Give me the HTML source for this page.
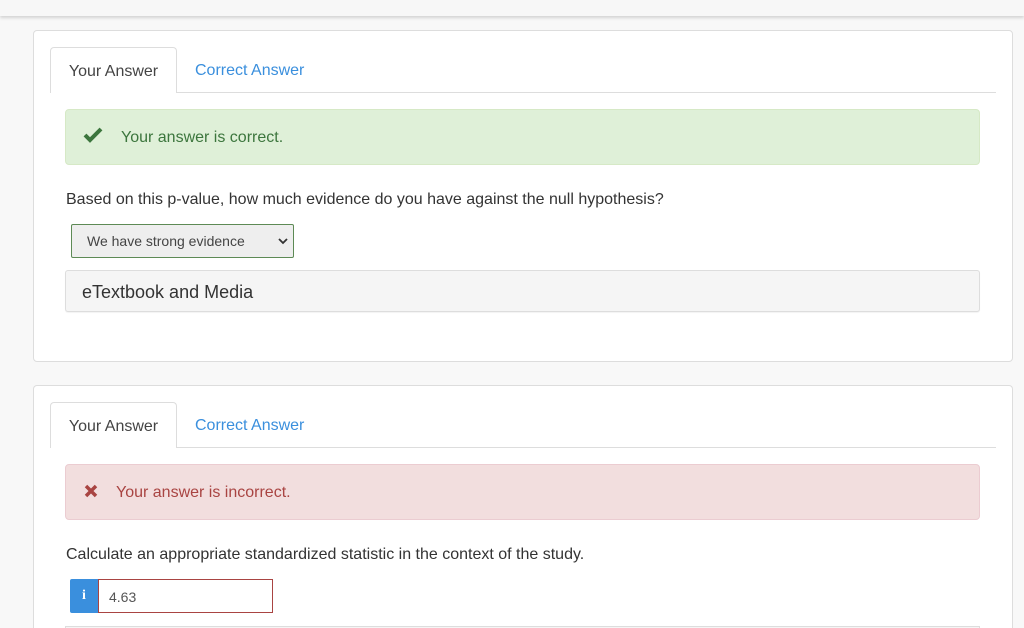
<!DOCTYPE html>
<html style="overflow:hidden;height:628px"><head><style>
body{margin:0;width:1024px;height:628px;overflow:hidden;background:#f8f8f8;font-family:"Liberation Sans",sans-serif;position:relative}
.top{position:absolute;left:0;top:0;width:1024px;height:16px;background:#f7f7f7;box-shadow:0 2px 3px rgba(0,0,0,.15)}
.panel{position:absolute;left:33px;width:978px;background:#fff;border:1px solid #ddd;border-radius:4px}
.tabline{position:absolute;left:16px;width:946px;height:1px;background:#ddd}
.tab{position:absolute;left:16px;width:125px;height:45px;border:1px solid #ddd;border-bottom:none;border-radius:4px 4px 0 0;background:#fff;font-size:16px;color:#444;line-height:47px;text-align:center}
.tab2{position:absolute;left:161px;font-size:16px;color:#3a8fdd;line-height:47px}
.alert{position:absolute;left:31px;width:913px;height:54px;border-radius:4px;font-size:16px;line-height:56px}
.q{position:absolute;left:32px;font-size:16px;color:#333}
</style></head><body>
<div class="top"></div>
<div class="panel" style="top:30px;height:330px">
 <div class="tabline" style="top:61px"></div>
 <div class="tab" style="top:16px">Your Answer</div>
 <div class="tab2" style="top:16px">Correct Answer</div>
 <div class="alert" style="top:78px;background:#dff0d8;border:1px solid #d6e9c6;color:#3c763d">
  <svg style="position:absolute;left:17px;top:17px" width="20" height="16" viewBox="0 0 20 16"><path d="M2 8 L7 13 L18 2" stroke="#3c763d" stroke-width="4" fill="none"/></svg>
  <span style="position:absolute;left:55px">Your answer is correct.</span></div>
 <div class="q" style="top:160px">Based on this p-value, how much evidence do you have against the null hypothesis?</div>
 <div style="position:absolute;left:37px;top:193px;width:221px;height:32px;border:1px solid #5d8a55;border-radius:2px;background:#eee;font-size:14px;color:#444;line-height:33px">
  <span style="position:absolute;left:15px">We have strong evidence</span>
  <svg style="position:absolute;left:206px;top:12px" width="10" height="8" viewBox="0 0 10 8"><path d="M1 2 L5 6 L9 2" stroke="#333" stroke-width="1.8" fill="none"/></svg></div>
 <div style="position:absolute;left:31px;top:239px;width:913px;height:40px;border:1px solid #ddd;border-radius:3px;background:#f5f5f5;font-size:18px;color:#333;line-height:42px;box-shadow:0 1px 1px rgba(0,0,0,.05)"><span style="margin-left:16px">eTextbook and Media</span></div>
</div>
<div class="panel" style="top:385px;height:243px;border-bottom:none;border-radius:4px 4px 0 0;overflow:hidden">
 <div class="tabline" style="top:61px"></div>
 <div class="tab" style="top:16px">Your Answer</div>
 <div class="tab2" style="top:16px">Correct Answer</div>
 <div class="alert" style="top:78px;background:#f2dede;border:1px solid #ebccd1;color:#a94442">
  <svg style="position:absolute;left:18px;top:19px" width="14" height="14" viewBox="0 0 14 14"><path d="M2 2 L12 12 M12 2 L2 12" stroke="#a94442" stroke-width="3.5" fill="none"/></svg>
  <span style="position:absolute;left:50px">Your answer is incorrect.</span></div>
 <div class="q" style="top:160px">Calculate an appropriate standardized statistic in the context of the study.</div>
 <div style="position:absolute;left:36px;top:193px;width:28px;height:34px;background:#3a8fdd;border-radius:2px 0 0 2px;color:#fff;font-weight:bold;font-size:14px;text-align:center;line-height:34px;font-family:'Liberation Serif',serif">i</div>
 <div style="position:absolute;left:64px;top:193px;width:173px;height:32px;border:1px solid #a94442;background:#fff;font-size:14px;color:#555;line-height:34px"><span style="margin-left:10px">4.63</span></div>
 <div style="position:absolute;left:31px;top:240px;width:913px;height:10px;border:1px solid #ddd;background:#f5f5f5"></div>
</div>
</body></html>
